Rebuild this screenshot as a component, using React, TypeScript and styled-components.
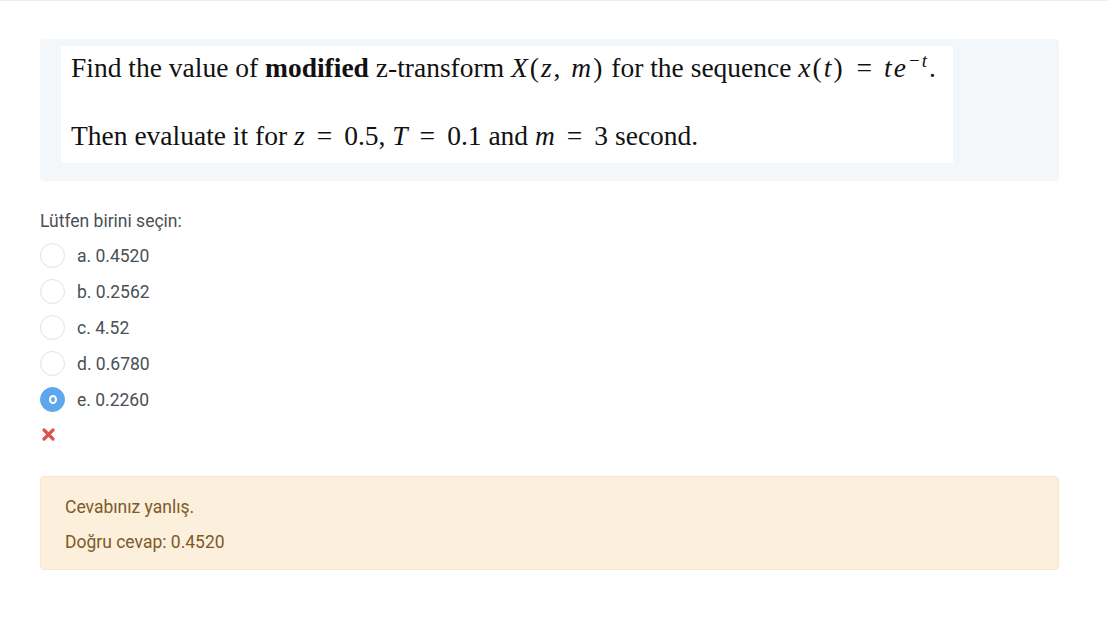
import React from "react";
import styled, { createGlobalStyle } from "styled-components";

const Global = createGlobalStyle`
  html, body {
    margin: 0;
    padding: 0;
    background: #ffffff;
  }
  body {
    border-top: 1px solid #eeeeee;
    font-family: Roboto, "Liberation Sans", sans-serif;
  }
`;

const Page = styled.div`
  width: 1019px;
  margin-left: 40px;
  padding-top: 38px;
`;

const Formulation = styled.div`
  background-color: #f4f7fa;
  border-radius: 4px;
  padding: 7px 21px 18px 21px;
`;

const QText = styled.div`
  width: 872px;
  background-color: #ffffff;
  padding: 4px 10px 9px 10px;
  font-family: "Liberation Serif", "Times New Roman", serif;
  font-size: 27.5px;
  color: #111111;
  white-space: nowrap;
`;

const Para = styled.p`
  margin: 0;
  line-height: 36px;
  & + & {
    margin-top: 32px;
  }
`;

const Math = styled.span<{ $spread?: boolean }>`
  letter-spacing: ${(p) => (p.$spread ? "2px" : "0")};
`;

const Var = styled.i`
  font-style: italic;
`;

const Op = styled.span`
  margin: 0 12px;
  letter-spacing: 0;
`;

const Sup = styled.sup`
  font-size: 19px;
  line-height: 0;
  margin-left: 1px;
`;

const Prompt = styled.div`
  margin-top: 30px;
  font-size: 17.5px;
  color: #495057;
`;

const Answers = styled.div`
  display: flex;
  flex-direction: column;
  gap: 11px;
  margin-top: 12px;
`;

const Option = styled.label`
  display: flex;
  align-items: center;
  gap: 12px;
  height: 25px;
  font-size: 17.5px;
  color: #495057;
`;

const Radio = styled.span<{ $checked?: boolean }>`
  box-sizing: border-box;
  width: 25px;
  height: 25px;
  border-radius: 50%;
  display: flex;
  align-items: center;
  justify-content: center;
  background-color: ${(p) => (p.$checked ? "#5fa7ec" : "#ffffff")};
  border: 1px solid ${(p) => (p.$checked ? "#5fa7ec" : "#dfe4e6")};
`;

const Dot = styled.span`
  box-sizing: border-box;
  width: 8px;
  height: 9px;
  border-radius: 50%;
  border: 2.5px solid #ffffff;
`;

const Wrong = styled.div`
  margin-top: 14px;
  margin-left: 2px;
  height: 16px;
  display: flex;
  align-items: center;
`;

const Feedback = styled.div`
  margin-top: 34px;
  background-color: #fcefdc;
  border: 1px solid #fbe6ca;
  border-radius: 4px;
  padding: 19px 24px 16px 24px;
  color: #7d5a29;
  font-size: 17.5px;
  line-height: 22px;
  display: flex;
  flex-direction: column;
  gap: 13px;
`;

const options = [
  { letter: "a", value: "0.4520" },
  { letter: "b", value: "0.2562" },
  { letter: "c", value: "4.52" },
  { letter: "d", value: "0.6780" },
  { letter: "e", value: "0.2260", checked: true },
];

function App() {
  return (
    <>
      <Global />
      <Page>
        <Formulation>
          <QText>
            <Para>
              Find the value of <b>modified</b> z-transform{" "}
              <Math $spread>
                <Var>X</Var>(<Var>z</Var>, <Var>m</Var>)
              </Math>{" "}
              for the sequence{" "}
              <Math $spread>
                <Var>x</Var>(<Var>t</Var>)<Op>=</Op>
                <Var>te</Var>
                <Sup>
                  −<Var>t</Var>
                </Sup>
              </Math>
              .
            </Para>
            <Para>
              Then evaluate it for{" "}
              <Math>
                <Var>z</Var>
                <Op>=</Op>0.5, <Var>T</Var>
                <Op>=</Op>0.1
              </Math>{" "}
              and{" "}
              <Math>
                <Var>m</Var>
                <Op>=</Op>3
              </Math>{" "}
              second.
            </Para>
          </QText>
        </Formulation>

        <Prompt>Lütfen birini seçin:</Prompt>
        <Answers>
          {options.map((o) => (
            <Option key={o.letter}>
              <Radio $checked={o.checked}>{o.checked && <Dot />}</Radio>
              <span>
                {o.letter}. {o.value}
              </span>
            </Option>
          ))}
        </Answers>

        <Wrong>
          <svg width="13" height="13" viewBox="0 0 13 13">
            <path
              d="M2 2 L11 11 M11 2 L2 11"
              stroke="#d9534f"
              strokeWidth="3.2"
              strokeLinecap="round"
            />
          </svg>
        </Wrong>

        <Feedback>
          <div>Cevabınız yanlış.</div>
          <div>Doğru cevap: 0.4520</div>
        </Feedback>
      </Page>
    </>
  );
}

export default App;
